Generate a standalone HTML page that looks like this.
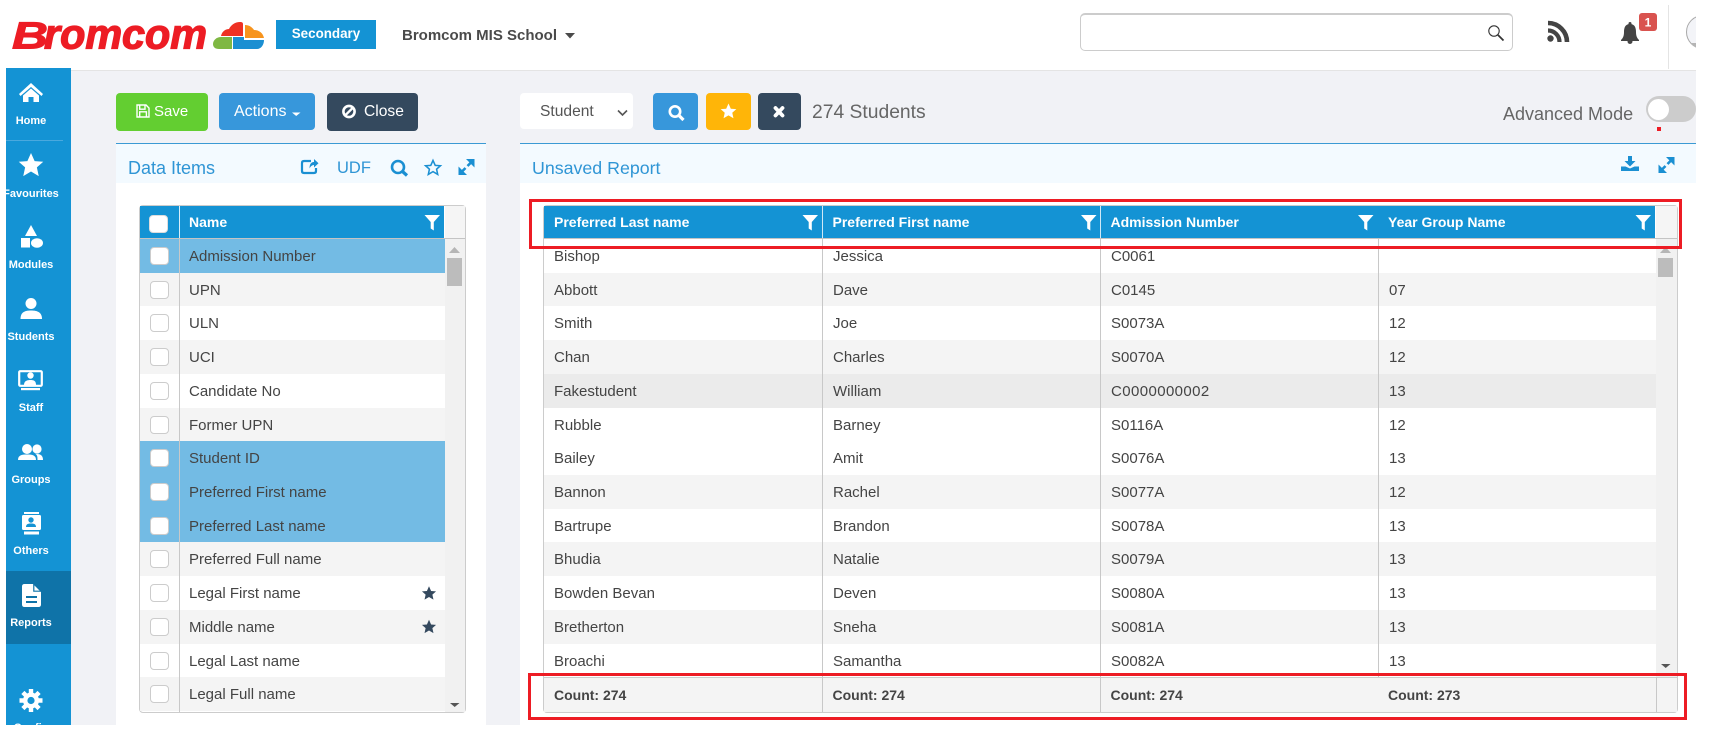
<!DOCTYPE html>
<html lang="en"><head><meta charset="utf-8"><title>Bromcom Report</title>
<style>
html,body{margin:0;padding:0;background:#fff}
body{position:relative;width:1712px;height:745px;overflow:hidden;font-family:"Liberation Sans",sans-serif;color:#444}
.a{position:absolute}
.t{position:absolute;white-space:nowrap}
.btn{position:absolute;border-radius:4px;color:#fff;font-size:16px;line-height:37px;white-space:nowrap}
.side{position:absolute;left:6px;top:68px;width:65px;height:657px;background:#1493d4;overflow:hidden}
.lb{position:absolute;left:-15px;width:80px;text-align:center;color:#fff;font-size:11px;font-weight:bold;line-height:16px;height:16px}
.r{position:relative;height:33.73px;line-height:33.73px;font-size:15px;color:#444;background:#fff;white-space:nowrap}
.g{background:#f4f4f4}.s{background:#73bbe4}.d{background:#ebebeb}
.r span{position:absolute;top:1px}
.cb{position:absolute;left:10px;top:8px;width:17px;height:16px;border:1px solid #ccc;border-radius:4px;background:#fff}
.h{position:absolute;top:206px;height:32px;line-height:32px;background:#1493d4;color:#fff;font-size:14px;font-weight:bold;white-space:nowrap}
.ln{position:absolute;width:1px;background:#c8c8c8}
.red{position:absolute;border:3px solid #ed1c24;box-sizing:border-box}
.cnt{position:absolute;top:677px;line-height:36px;font-size:14px;font-weight:bold;color:#444;white-space:nowrap}
</style></head><body>

<!-- app background -->
<div class="a" style="left:71px;top:70px;width:1625px;height:655px;background:#f1f2f6;border-top:1px solid #e4e4e4;box-sizing:border-box"></div>

<!-- header -->
<div class="a" style="left:276px;top:20px;width:100px;height:29px;background:#1493d4;color:#fff;font-size:13.4px;font-weight:bold;line-height:28px;text-align:center">Secondary</div>
<div class="t" style="left:402px;top:25px;font-size:15px;font-weight:bold;line-height:22px;color:#4a4a4a">Bromcom MIS School</div>
<div class="a" style="left:1080px;top:13px;width:433px;height:38px;box-sizing:border-box;border:1px solid #ccc;border-top:2px solid #ccc;border-radius:5px;background:#fff"></div>
<div class="a" style="left:1668px;top:5px;width:1px;height:64px;background:#e4e4e4"></div>

<!-- sidebar -->
<div class="side">
  <div class="a" style="left:0;top:72px;width:57px;height:1px;background:#4aa9de"></div>
  <div class="a" style="left:0;top:503px;width:65px;height:73px;background:#0f73a8"></div>
  <div class="lb" style="top:45px">Home</div>
  <div class="lb" style="top:118px">Favourites</div>
  <div class="lb" style="top:189px">Modules</div>
  <div class="lb" style="top:261px">Students</div>
  <div class="lb" style="top:332px">Staff</div>
  <div class="lb" style="top:404px">Groups</div>
  <div class="lb" style="top:475px">Others</div>
  <div class="lb" style="top:547px">Reports</div>
  <div class="lb" style="top:652px">Config</div>
</div>

<!-- toolbar -->
<div class="btn" style="left:116px;top:93px;width:92px;height:38px;background:#63ce31"><span class="t" style="left:38px;font-size:15px">Save</span></div>
<div class="btn" style="left:219px;top:93px;width:96px;height:37px;background:#3797db"><span class="t" style="left:15px">Actions</span></div>
<div class="btn" style="left:327px;top:93px;width:91px;height:38px;background:#34495e"><span class="t" style="left:37px;font-size:15.6px">Close</span></div>

<div class="a" style="left:520px;top:93px;width:113px;height:36px;background:#fff;border-radius:4px"></div>
<div class="t" style="left:540px;top:101px;font-size:15.6px;line-height:22px;color:#555">Student</div>
<div class="a" style="left:653px;top:93px;width:45px;height:37px;background:#3797db;border-radius:4px"></div>
<div class="a" style="left:706px;top:93px;width:45px;height:37px;background:#ffb508;border-radius:4px"></div>
<div class="a" style="left:758px;top:93px;width:43px;height:37px;background:#34495e;border-radius:4px"></div>
<div class="t" style="left:812px;top:101px;font-size:19.3px;line-height:24px;color:#666">274 Students</div>
<div class="t" style="left:1503px;top:103px;font-size:18px;line-height:22px;color:#666">Advanced Mode</div>

<!-- left panel -->
<div class="a" style="left:116px;top:143px;width:370px;height:582px;background:#fff"></div>
<div class="a" style="left:116px;top:143px;width:370px;height:40px;background:#f3faff;border-top:1px solid #3b9ad4;box-sizing:border-box"></div>
<div class="t" style="left:128px;top:157px;font-size:18px;line-height:22px;color:#2f95d5">Data Items</div>
<div class="t" style="left:337px;top:157px;font-size:16.5px;line-height:22px;color:#2f95d5">UDF</div>

<!-- left grid -->
<div class="a" style="left:139px;top:205px;width:327px;height:508px;box-sizing:border-box;border:1px solid #ccc;border-radius:4px;background:#fff"></div>
<div class="h" style="left:140px;width:304px"><span class="t" style="left:49px;">Name</span></div>
<div class="a" style="left:149px;top:215px;width:17px;height:16px;border:1px solid #ddd;border-radius:4px;background:#fff"></div>
<div class="a" style="left:179px;top:206px;width:1px;height:32px;background:#d8eefa"></div>
<div class="a" style="left:445px;top:206px;width:20px;height:32px;background:#f5f5f5"></div>
<div class="a" style="left:140px;top:238px;width:325px;height:1px;background:#c4c4c4"></div>
<div class="a" style="left:445px;top:239px;width:20px;height:473px;background:#f1f1f1"></div>
<div class="a" style="left:447px;top:258px;width:15px;height:28px;background:#bcbcbc"></div>
<div class="a" style="left:140px;top:239px;width:305px;height:473px;overflow:hidden">
  <div class="r s"><i class="cb"></i><span style="left:49px">Admission Number</span></div>
  <div class="r g"><i class="cb"></i><span style="left:49px">UPN</span></div>
  <div class="r"><i class="cb"></i><span style="left:49px">ULN</span></div>
  <div class="r g"><i class="cb"></i><span style="left:49px">UCI</span></div>
  <div class="r"><i class="cb"></i><span style="left:49px">Candidate No</span></div>
  <div class="r g"><i class="cb"></i><span style="left:49px">Former UPN</span></div>
  <div class="r s"><i class="cb"></i><span style="left:49px">Student ID</span></div>
  <div class="r s"><i class="cb"></i><span style="left:49px">Preferred First name</span></div>
  <div class="r s"><i class="cb"></i><span style="left:49px">Preferred Last name</span></div>
  <div class="r g"><i class="cb"></i><span style="left:49px">Preferred Full name</span></div>
  <div class="r"><i class="cb"></i><span style="left:49px">Legal First name</span></div>
  <div class="r g"><i class="cb"></i><span style="left:49px">Middle name</span></div>
  <div class="r"><i class="cb"></i><span style="left:49px">Legal Last name</span></div>
  <div class="r g"><i class="cb"></i><span style="left:49px">Legal Full name</span></div>
</div>
<div class="ln" style="left:179px;top:239px;height:473px"></div>

<!-- right panel -->
<div class="a" style="left:520px;top:143px;width:1176px;height:582px;background:#fff"></div>
<div class="a" style="left:520px;top:143px;width:1176px;height:40px;background:#f3faff;border-top:1px solid #3b9ad4;box-sizing:border-box"></div>
<div class="t" style="left:532px;top:157px;font-size:17.8px;line-height:22px;color:#2f95d5">Unsaved Report</div>

<!-- right grid -->
<div class="a" style="left:543px;top:205px;width:1135px;height:508px;box-sizing:border-box;border:1px solid #ccc;border-radius:4px;background:#fff"></div>
<div class="h" style="left:544px;width:1111px">
  <span class="t" style="left:10px">Preferred Last name</span>
  <span class="t" style="left:288.5px">Preferred First name</span>
  <span class="t" style="left:566.5px">Admission Number</span>
  <span class="t" style="left:844px">Year Group Name</span>
</div>
<div class="a" style="left:822px;top:206px;width:1px;height:32px;background:#cfe8f6"></div>
<div class="a" style="left:1100px;top:206px;width:1px;height:32px;background:#cfe8f6"></div>
<div class="a" style="left:1656px;top:206px;width:21px;height:32px;background:#f5f5f5"></div>
<div class="a" style="left:544px;top:238px;width:1133px;height:1px;background:#c4c4c4"></div>
<div class="a" style="left:1656px;top:239px;width:21px;height:438px;background:#f1f1f1"></div>
<div class="a" style="left:1658px;top:258px;width:15px;height:19px;background:#bcbcbc"></div>
<div class="a" style="left:544px;top:239px;width:1112px;height:438px;overflow:hidden">
  <div class="r"><span style="left:10px">Bishop</span><span style="left:289px">Jessica</span><span style="left:567px">C0061</span></div>
  <div class="r g"><span style="left:10px">Abbott</span><span style="left:289px">Dave</span><span style="left:567px">C0145</span><span style="left:845px">07</span></div>
  <div class="r"><span style="left:10px">Smith</span><span style="left:289px">Joe</span><span style="left:567px">S0073A</span><span style="left:845px">12</span></div>
  <div class="r g"><span style="left:10px">Chan</span><span style="left:289px">Charles</span><span style="left:567px">S0070A</span><span style="left:845px">12</span></div>
  <div class="r d"><span style="left:10px">Fakestudent</span><span style="left:289px">William</span><span style="left:567px;letter-spacing:.4px">C0000000002</span><span style="left:845px">13</span></div>
  <div class="r"><span style="left:10px">Rubble</span><span style="left:289px">Barney</span><span style="left:567px">S0116A</span><span style="left:845px">12</span></div>
  <div class="r"><span style="left:10px">Bailey</span><span style="left:289px">Amit</span><span style="left:567px">S0076A</span><span style="left:845px">13</span></div>
  <div class="r g"><span style="left:10px">Bannon</span><span style="left:289px">Rachel</span><span style="left:567px">S0077A</span><span style="left:845px">12</span></div>
  <div class="r"><span style="left:10px">Bartrupe</span><span style="left:289px">Brandon</span><span style="left:567px">S0078A</span><span style="left:845px">13</span></div>
  <div class="r g"><span style="left:10px">Bhudia</span><span style="left:289px">Natalie</span><span style="left:567px">S0079A</span><span style="left:845px">13</span></div>
  <div class="r"><span style="left:10px">Bowden Bevan</span><span style="left:289px">Deven</span><span style="left:567px">S0080A</span><span style="left:845px">13</span></div>
  <div class="r g"><span style="left:10px">Bretherton</span><span style="left:289px">Sneha</span><span style="left:567px">S0081A</span><span style="left:845px">13</span></div>
  <div class="r"><span style="left:10px">Broachi</span><span style="left:289px">Samantha</span><span style="left:567px">S0082A</span><span style="left:845px">13</span></div>
</div>
<div class="ln" style="left:822px;top:239px;height:438px"></div>
<div class="ln" style="left:1100px;top:239px;height:438px"></div>
<div class="ln" style="left:1378px;top:239px;height:438px"></div>

<!-- footer -->
<div class="a" style="left:544px;top:677px;width:1133px;height:35px;background:#f4f4f4;border-top:1px solid #ccc;box-sizing:border-box"></div>
<div class="ln" style="left:822px;top:677px;height:35px"></div>
<div class="ln" style="left:1100px;top:677px;height:35px"></div>
<div class="ln" style="left:1656px;top:677px;height:35px"></div>
<div class="cnt" style="left:554px">Count: 274</div>
<div class="cnt" style="left:832.5px">Count: 274</div>
<div class="cnt" style="left:1110.5px">Count: 274</div>
<div class="cnt" style="left:1388px">Count: 273</div>

<!-- all icons, logo -->
<svg class="a" style="left:0;top:0" width="1712" height="745" viewBox="0 0 1712 745">
  <!-- logo -->
  <text x="12" y="48.500" font-family="Liberation Sans" font-weight="bold" font-style="italic" font-size="38" fill="#ed1c24" stroke="#ed1c24" stroke-width="1" textLength="36" lengthAdjust="spacingAndGlyphs">B</text>
  <text x="44" y="48.500" font-family="Liberation Sans" font-weight="bold" font-style="italic" font-size="42" fill="#ed1c24" stroke="#ed1c24" stroke-width="1.300" textLength="163" lengthAdjust="spacingAndGlyphs">romcom</text>
  <path d="M221 36C222 31 226 29 229 29C231 25 235 22 240 22C241 22 243 22 243 24V36Z" fill="#ee3124"/>
  <path d="M245 25C249 25 252 27 254 30C259 30 263 33 264 38H245Z" fill="#f7941d"/>
  <path d="M232 37V49H219C215 49 213 47 213 44C213 40 217 37 221 37Z" fill="#7fb843"/>
  <path d="M233 37H244V40H264C264 45 261 49 257 49H233Z" fill="#1b8fd2"/>
  <polygon points="565,33 575,33 570,38.500" fill="#4a4a4a"/>

  <!-- sidebar icons -->
  <g fill="#fff">
    <path d="M31 83L43 94 41.500 96 31 87 20.500 96 19 94Z"/>
    <path d="M23 95.500L31 88.500 39 95.500V102H33.500V97H28.500V102H23Z"/>
    <polygon transform="translate(31 165.5) scale(1.25)" points="0,-10 2.9,-3.5 9.8,-3 4.7,1.5 6.2,8.5 0,4.8 -6.2,8.5 -4.7,1.5 -9.8,-3 -2.9,-3.5"/>
    <polygon points="31,225 37,236 25,236"/>
    <rect x="21" y="238" width="9" height="9.500"/>
    <ellipse cx="37" cy="243" rx="6" ry="4.800"/>
    <circle cx="31" cy="303.500" r="5.500"/>
    <path d="M20.500 319C20.500 312 25 310.500 31 310.500C37 310.500 42 312 42 319Z"/>
    <rect x="21" y="388" width="19" height="2.200"/>
    <circle cx="27" cy="449" r="5"/><circle cx="37" cy="449" r="4.600"/>
    <path d="M18 460C18 455 22 454.500 27 454.500C32 454.500 36 455 36 460Z"/>
    <path d="M37 454C41 454 43 456 43 460H37.500C37.500 457 37.500 455 35.500 454.500Z"/>
    <rect x="22" y="515" width="19" height="15" rx="1.500"/>
    <rect x="24" y="512" width="15" height="2"/>
    <rect x="24" y="531.500" width="15" height="3"/>
    <path d="M24.500 584H33L41 592V604.500Q41 607 38.500 607H24.500Q22 607 22 604.500V586.500Q22 584 24.500 584Z"/>
    <circle cx="31" cy="700.500" r="8"/>
  </g>
  <rect x="19.200" y="371.200" width="22.600" height="14.600" rx="1" fill="none" stroke="#fff" stroke-width="2.200"/>
  <circle cx="30.500" cy="375.500" r="3.200" fill="#fff"/>
  <path d="M24 385C24 381 27 380 30.500 380C34 380 36 381 36 385Z" fill="#fff"/>
  <circle cx="31" cy="520" r="2.700" fill="#1493d4"/>
  <path d="M26 527C26 524 28 523.500 31 523.500C34 523.500 36 524 36 527Z" fill="#1493d4"/>
  <path d="M33.800 584V591.200H41" fill="none" stroke="#0f73a8" stroke-width="1.200"/>
  <rect x="26" y="596" width="11" height="2" fill="#0f73a8"/>
  <rect x="26" y="601" width="11" height="2" fill="#0f73a8"/>
  <g stroke="#fff" stroke-width="4.400">
    <path d="M31 689V712M19.500 700.500H42.500M22.900 692.400L39.100 708.600M39.100 692.400L22.900 708.600"/>
  </g>
  <circle cx="31" cy="700.500" r="3.600" fill="#1493d4"/>

  <!-- toolbar icons -->
  <g fill="none" stroke="#fff" stroke-width="1.400">
    <path d="M137 105H146L149 108V117H137Z"/>
    <path d="M139.700 105V109.200H145V105M139.700 117V111.800H146.400V117"/>
  </g>
  <polygon points="292,112.500 300.500,112.500 296.200,116" fill="#fff"/>
  <circle cx="349" cy="111.500" r="5.600" fill="none" stroke="#fff" stroke-width="2.600"/>
  <path d="M345.400 115.200L352.800 107.800" stroke="#fff" stroke-width="2.400"/>
  <path d="M618 110.500L622.500 115 627 110.500" fill="none" stroke="#555" stroke-width="1.600"/>
  <circle cx="675" cy="111.500" r="5.200" fill="none" stroke="#fff" stroke-width="2.600"/>
  <path d="M679 115.500L683.500 120" stroke="#fff" stroke-width="3.200"/>
  <polygon transform="translate(728.5 111.5) scale(.8)" points="0,-10 2.9,-3.5 9.8,-3 4.7,1.5 6.2,8.5 0,4.8 -6.2,8.5 -4.7,1.5 -9.8,-3 -2.9,-3.5" fill="#fff"/>
  <path d="M775.500 108L782.500 115.500M782.500 108L775.500 115.500" stroke="#fff" stroke-width="3.800" stroke-linecap="round"/>

  <!-- header icons -->
  <circle cx="1494" cy="31" r="5.200" fill="none" stroke="#333" stroke-width="1.100"/>
  <path d="M1498 35L1503.500 40.500" stroke="#333" stroke-width="1.800"/>
  <circle cx="1550.500" cy="38.500" r="3.200" fill="#444"/>
  <path d="M1548 30.500A11.500 11.500 0 0 1 1559.500 42" fill="none" stroke="#444" stroke-width="4.200"/>
  <path d="M1548 23A19 19 0 0 1 1567 42" fill="none" stroke="#444" stroke-width="4.600"/>
  <path d="M1630 24C1625 24 1624 28 1624 32C1624 36 1623 38 1621 40V41H1639V40C1637 38 1636 36 1636 32C1636 28 1635 24 1630 24Z" fill="#444"/>
  <circle cx="1630" cy="41.500" r="2.500" fill="#444"/><circle cx="1630" cy="23.500" r="1.500" fill="#444"/>
  <rect x="1639" y="13" width="18" height="18" rx="3" fill="#d9534f"/>
  <text x="1648" y="26.500" text-anchor="middle" font-family="Liberation Sans" font-weight="bold" font-size="12" fill="#fff">1</text>
  <circle cx="1703" cy="32" r="16.500" fill="#f3f4f8" stroke="#a9a9a9"/>
  <path d="M1690 43A17 17 0 0 0 1703 49V43Z" fill="#b5b5b5"/>
  <rect x="1696" y="0" width="16" height="745" fill="#fff"/>

  <!-- toggle -->
  <rect x="1646" y="96" width="50" height="26" rx="13" fill="#ccc"/>
  <circle cx="1658.500" cy="109.500" r="10.500" fill="#fff"/>
  <rect x="1657" y="127" width="4" height="4" fill="#ed1c24"/>

  <!-- panel icons -->
  <path d="M311 161H304Q302 161 302 163V171Q302 173 304 173H314Q316 173 316 171V168" fill="none" stroke="#1a8fd2" stroke-width="2.200"/>
  <path d="M309.500 168.500C309.500 163 312 162 314 162V159L318.500 163.200 314 167.500V165C312 165 310.500 166.500 309.500 168.500Z" fill="#1a8fd2"/>
  <circle cx="398" cy="167" r="6" fill="none" stroke="#1a8fd2" stroke-width="2.600"/>
  <path d="M402.500 171.500L407 175.500" stroke="#1a8fd2" stroke-width="3.200"/>
  <polygon transform="translate(433 168) scale(.76)" points="0,-10 2.9,-3.5 9.8,-3 4.7,1.5 6.2,8.5 0,4.8 -6.2,8.5 -4.7,1.5 -9.8,-3 -2.9,-3.5" fill="none" stroke="#1a8fd2" stroke-width="2"/>
  <g fill="#1a8fd2">
    <polygon points="466,159 474.500,159 474.500,167.500"/>
    <polygon points="458.500,166.500 458.500,175 467,175"/>
    <path d="M462 171.500L465.500 168M467.500 166L471 162.500" stroke="#1a8fd2" stroke-width="2.600"/>
  </g>
  <g transform="translate(1200 -2)" fill="#1a8fd2">
    <polygon points="466,159 474.500,159 474.500,167.500"/>
    <polygon points="458.500,166.500 458.500,175 467,175"/>
    <path d="M462 171.500L465.500 168M467.500 166L471 162.500" stroke="#1a8fd2" stroke-width="2.600"/>
  </g>
  <polygon points="1628,156 1632,156 1632,161 1635.500,161 1630,166.500 1624.500,161 1628,161" fill="#1a8fd2"/>
  <path d="M1621 171V166.500H1625.500L1630 168.500 1634.500 166.500H1639V171Z" fill="#1a8fd2"/>

  <!-- filters -->
  <g fill="#fff">
    <polygon transform="translate(424.500 215)" points="0,0 15.500,0 9.300,7 9.300,15.500 6.200,13.500 6.200,7"/>
    <polygon transform="translate(802.500 215)" points="0,0 15.500,0 9.300,7 9.300,15.500 6.200,13.500 6.200,7"/>
    <polygon transform="translate(1081 215)" points="0,0 15.500,0 9.300,7 9.300,15.500 6.200,13.500 6.200,7"/>
    <polygon transform="translate(1358 215)" points="0,0 15.500,0 9.300,7 9.300,15.500 6.200,13.500 6.200,7"/>
    <polygon transform="translate(1635.500 215)" points="0,0 15.500,0 9.300,7 9.300,15.500 6.200,13.500 6.200,7"/>
  </g>

  <!-- scroll arrows -->
  <polygon points="454.500,247 460,253 449,253" fill="#b5b5b5"/>
  <polygon points="450,703 459.500,703 454.700,707" fill="#555"/>
  <polygon points="1665.500,247 1671,253 1660,253" fill="#b5b5b5"/>
  <polygon points="1661,664 1670.500,664 1665.700,668" fill="#555"/>

  <!-- row stars -->
  <polygon transform="translate(429 593.5) scale(.72)" points="0,-10 2.9,-3.5 9.8,-3 4.7,1.5 6.2,8.5 0,4.8 -6.2,8.5 -4.7,1.5 -9.8,-3 -2.9,-3.5" fill="#34495e"/>
  <polygon transform="translate(429 627) scale(.72)" points="0,-10 2.9,-3.5 9.8,-3 4.7,1.5 6.2,8.5 0,4.8 -6.2,8.5 -4.7,1.5 -9.8,-3 -2.9,-3.5" fill="#34495e"/>
</svg>

<!-- red annotation boxes -->
<div class="red" style="left:529px;top:199px;width:1153px;height:50px"></div>
<div class="red" style="left:528px;top:673px;width:1159px;height:47px"></div>

</body></html>
